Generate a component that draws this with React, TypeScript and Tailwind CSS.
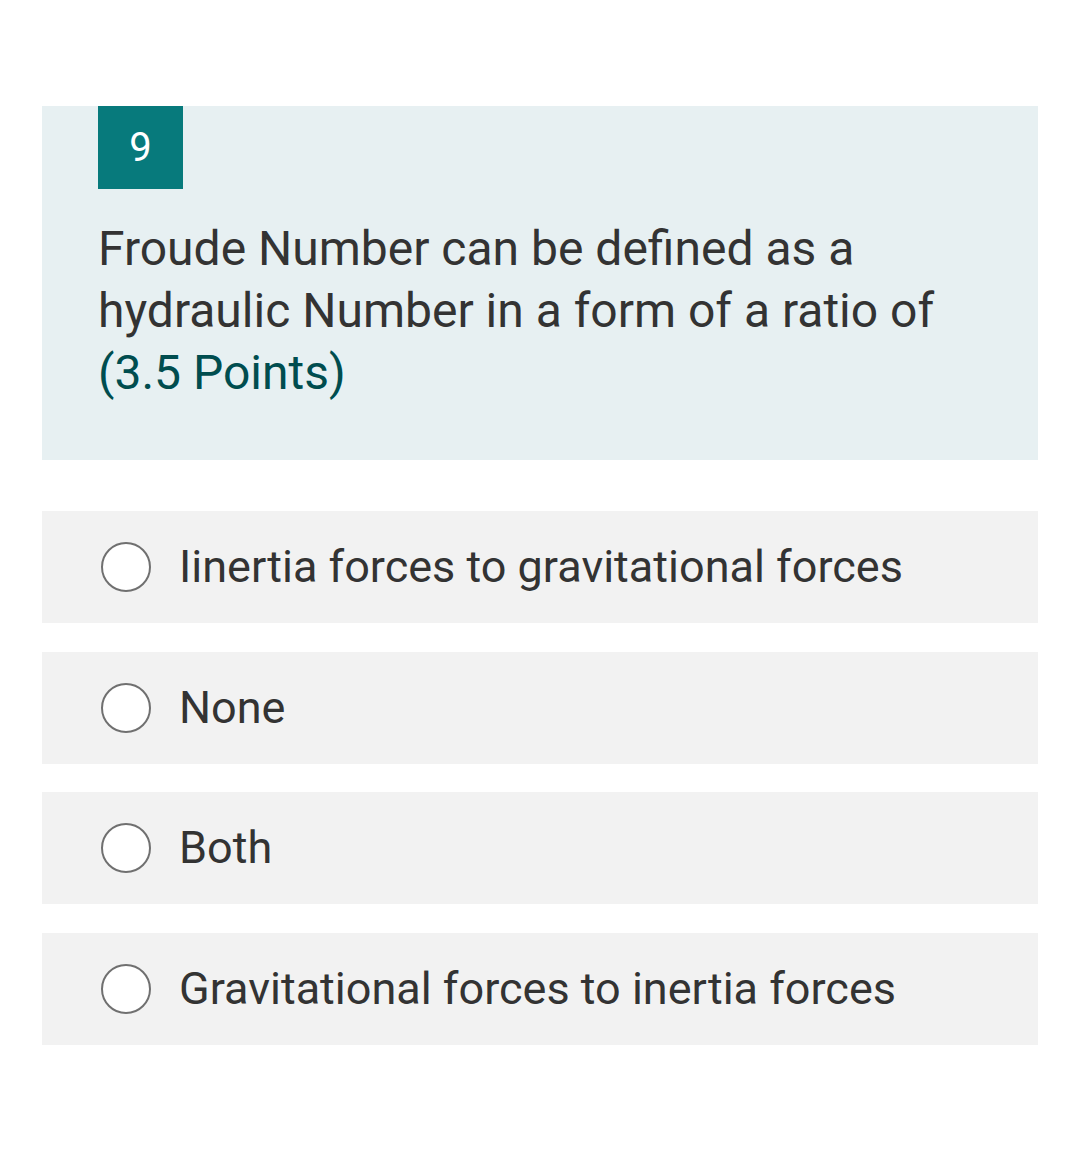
export default function App() {
  const options = [
    "Iinertia forces to gravitational forces",
    "None",
    "Both",
    "Gravitational forces to inertia forces",
  ];

  return (
    <div
      className="w-[1080px] h-[1159px] bg-white px-[42px] pt-[106px]"
      style={{ fontFamily: "Roboto, 'Noto Sans', sans-serif" }}
    >
      <div className="bg-[#e7f0f2] h-[354px] pl-[56px] pr-[40px]">
        <div className="w-[85px] h-[83px] bg-[#077a7c] text-white text-[40px] flex items-center justify-center">
          9
        </div>
        <div className="mt-[29px] text-[48px] leading-[62px] text-[#333333]">
          Froude Number can be defined as a
          <br />
          hydraulic Number in a form of a ratio of
          <br />
          <span className="text-[#004d4f]">(3.5 Points)</span>
        </div>
      </div>

      <div className="mt-[51px] flex flex-col gap-[28.5px]">
        {options.map((opt) => (
          <div
            key={opt}
            className="h-[112px] bg-[#f2f2f2] flex items-center pl-[59px]"
          >
            <div className="w-[50px] h-[50px] rounded-full border-2 border-[#707070] bg-white shrink-0" />
            <div className="ml-[28px] text-[45px] text-[#333333]">{opt}</div>
          </div>
        ))}
      </div>
    </div>
  );
}
